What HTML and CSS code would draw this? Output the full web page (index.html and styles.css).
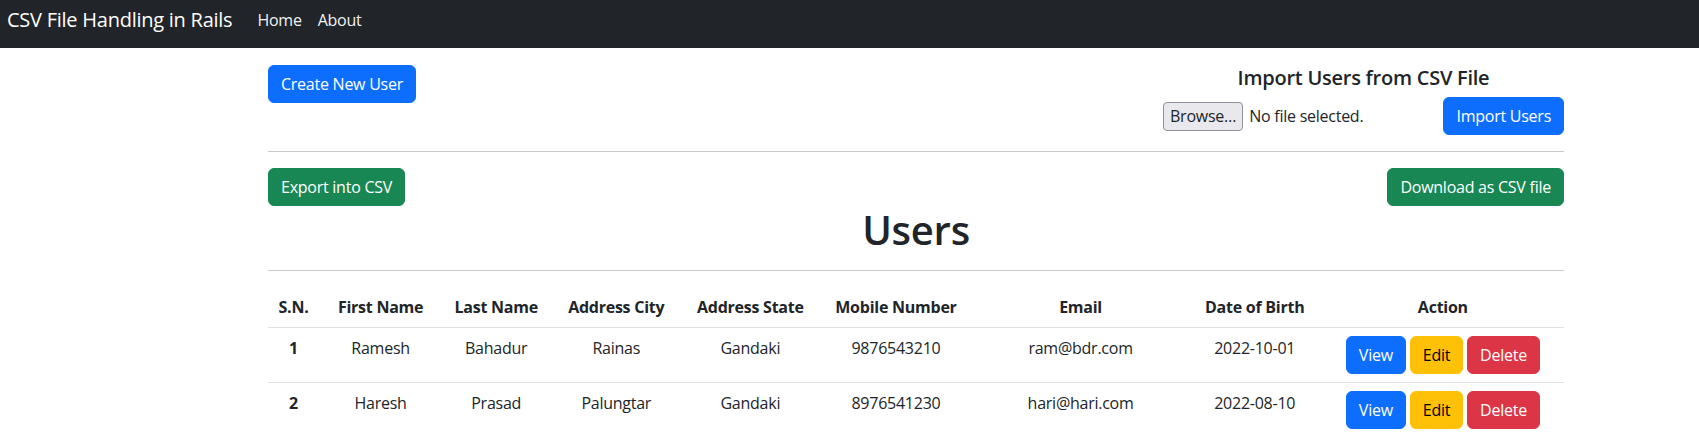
FILE: index.html
```html
<!DOCTYPE html>
<html lang="en">
<head>
    <meta charset="UTF-8">
    <meta name="viewport" content="width=device-width, initial-scale=1.0">
    <title>CSV File Handling in Rails</title>
    <link rel="stylesheet" href="styles.css">
</head>
<body>
    <nav class="navbar">
        <a class="navbar-brand" href="#">CSV File Handling in Rails</a>
        <a class="nav-link" href="#">Home</a>
        <a class="nav-link" href="#">About</a>
    </nav>

    <main class="container">
        <div class="top-row">
            <a class="btn btn-primary" href="#">Create New User</a>

            <form class="import-form">
                <h5>Import Users from CSV File</h5>
                <div class="import-row">
                    <label class="file-input">
                        <span class="browse">Browse…</span>
                        <span class="file-name">No file selected.</span>
                    </label>
                    <button type="button" class="btn btn-primary">Import Users</button>
                </div>
            </form>
        </div>

        <hr>

        <div class="export-row">
            <a class="btn btn-success" href="#">Export into CSV</a>
            <a class="btn btn-success" href="#">Download as CSV file</a>
        </div>

        <h1>Users</h1>

        <hr>

        <table class="table">
            <colgroup>
                <col class="col-sn">
                <col class="col-first">
                <col class="col-last">
                <col class="col-city">
                <col class="col-state">
                <col class="col-mobile">
                <col class="col-email">
                <col class="col-dob">
                <col class="col-action">
            </colgroup>
            <thead>
                <tr>
                    <th>S.N.</th>
                    <th>First Name</th>
                    <th>Last Name</th>
                    <th>Address City</th>
                    <th>Address State</th>
                    <th>Mobile Number</th>
                    <th>Email</th>
                    <th>Date of Birth</th>
                    <th>Action</th>
                </tr>
            </thead>
            <tbody>
                <tr>
                    <th>1</th>
                    <td>Ramesh</td>
                    <td>Bahadur</td>
                    <td>Rainas</td>
                    <td>Gandaki</td>
                    <td>9876543210</td>
                    <td>ram@bdr.com</td>
                    <td>2022-10-01</td>
                    <td>
                        <a class="btn btn-primary" href="#">View</a>
                        <a class="btn btn-warning" href="#">Edit</a>
                        <a class="btn btn-danger" href="#">Delete</a>
                    </td>
                </tr>
                <tr>
                    <th>2</th>
                    <td>Haresh</td>
                    <td>Prasad</td>
                    <td>Palungtar</td>
                    <td>Gandaki</td>
                    <td>8976541230</td>
                    <td>hari@hari.com</td>
                    <td>2022-08-10</td>
                    <td>
                        <a class="btn btn-primary" href="#">View</a>
                        <a class="btn btn-warning" href="#">Edit</a>
                        <a class="btn btn-danger" href="#">Delete</a>
                    </td>
                </tr>
            </tbody>
        </table>
    </main>
</body>
</html>
```

FILE: styles.css
```css
* {
    margin: 0;
    padding: 0;
    box-sizing: border-box;
}

body {
    font-family: 'Open Sans', 'Noto Sans', sans-serif;
    font-size: 16px;
    line-height: 1.5;
    letter-spacing: -0.25px;
    color: #212529;
    background-color: #fff;
}

a {
    text-decoration: none;
}

.navbar {
    display: flex;
    align-items: flex-start;
    height: 48px;
    background-color: #212529;
}

.navbar-brand {
    color: #fff;
    font-size: 20px;
    line-height: 30px;
    padding: 5px 0 0 7px;
    margin-right: 17px;
}

.nav-link {
    color: #f2f2f2;
    padding: 8px 8px 0;
}

.container {
    width: 1296px;
    margin-left: 268px;
}

.top-row {
    display: flex;
    justify-content: space-between;
    align-items: flex-start;
    margin-top: 17px;
}

.import-form {
    width: 401px;
}

.import-form h5 {
    font-size: 20px;
    font-weight: 600;
    line-height: 24px;
    text-align: center;
    margin: 1px 0 7px;
}

.import-row {
    display: flex;
    justify-content: space-between;
    align-items: center;
}

.file-input {
    display: flex;
    align-items: center;
    gap: 6px;
}

.browse {
    background-color: #e9e9ed;
    border: 1px solid #8f8f9d;
    border-radius: 4px;
    padding: 1px 6px 2px;
    line-height: 24px;
}

.btn {
    display: inline-block;
    padding: 6px 12px;
    font-size: 16px;
    line-height: 24px;
    letter-spacing: inherit;
    border: 1px solid transparent;
    border-radius: 6px;
    font-family: inherit;
    cursor: pointer;
}

.btn-primary {
    background-color: #0d6efd;
    border-color: #0d6efd;
    color: #fff;
}

.btn-success {
    background-color: #198754;
    border-color: #198754;
    color: #fff;
}

.btn-warning {
    background-color: #ffc107;
    border-color: #ffc107;
    color: #000;
}

.btn-danger {
    background-color: #dc3545;
    border-color: #dc3545;
    color: #fff;
}

hr {
    border: 0;
    border-top: 1px solid #c8c9ca;
    margin: 16px 0;
}

.export-row {
    display: flex;
    justify-content: space-between;
}

h1 {
    font-size: 40px;
    font-weight: 600;
    line-height: 48px;
    text-align: center;
}

.table {
    width: 100%;
    table-layout: fixed;
    border-collapse: collapse;
    text-align: center;
}

.col-sn { width: 51px; }
.col-first { width: 123px; }
.col-last { width: 108px; }
.col-city { width: 132px; }
.col-state { width: 136px; }
.col-mobile { width: 155px; }
.col-email { width: 214px; }
.col-dob { width: 134px; }
.col-action { width: 242px; }

.table th,
.table td {
    padding: 8px;
    vertical-align: top;
    border-bottom: 1px solid #dee2e6;
}

.table th {
    font-weight: 700;
}
```
